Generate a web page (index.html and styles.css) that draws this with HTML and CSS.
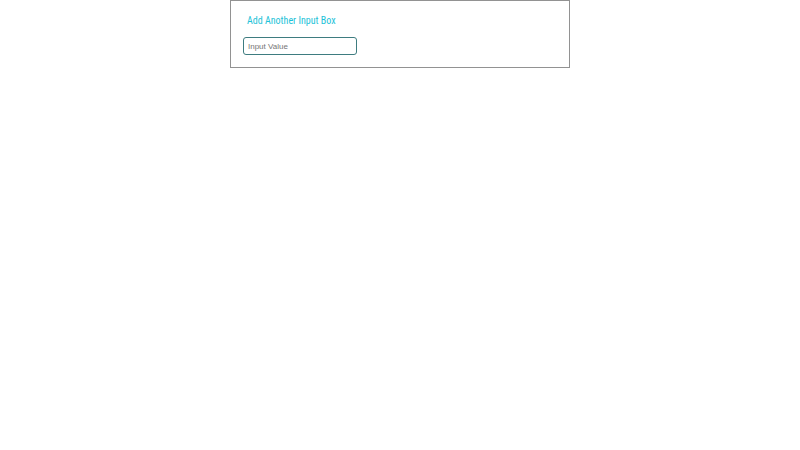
FILE: index.html
```html
<!DOCTYPE html>
<html lang="en">
<head>
<meta charset="utf-8">
<title>Input Boxes</title>
<link rel="stylesheet" href="styles.css">
</head>
<body>
<main class="panel">
<a class="add-link" href="#">Add Another Input Box</a>
<input class="field" type="text" placeholder="Input Value" aria-label="Input Value">
</main>
</body>
</html>
```

FILE: styles.css
```css
* {
  box-sizing: border-box;
}

body {
  margin: 0;
  background: #fff;
  font-family: Roboto, sans-serif;
}

.panel {
  display: flex;
  flex-direction: column;
  align-items: flex-start;
  gap: 8px;
  width: 100%;
  max-width: 340px;
  margin: 0 auto;
  padding: 12px;
  border: 1px solid #929292;
}

.add-link {
  padding: 0 4px;
  color: #1cc2d8;
  font-family: "Roboto Condensed", Roboto, sans-serif;
  font-size: 10px;
  line-height: 16px;
  text-decoration: none;
}

.field {
  width: 114px;
  height: 18px;
  padding: 2px 4px;
  border: 1px solid #3e7c80;
  border-radius: 3px;
  font-family: "Liberation Sans", sans-serif;
  font-size: 8px;
  line-height: 12px;
}
```
